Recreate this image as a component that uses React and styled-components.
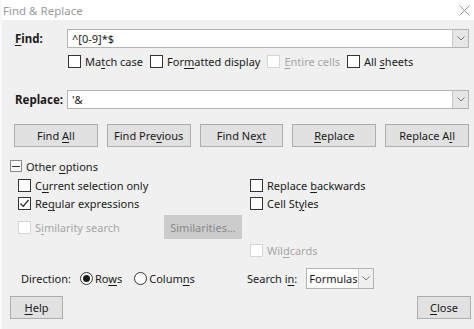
import React from "react";
import styled, { createGlobalStyle, css } from "styled-components";

const Global = createGlobalStyle`
  html, body { margin: 0; padding: 0; background: #f0f0f0; }
  * { box-sizing: border-box; }
`;

const Window = styled.div`
  width: 474px;
  height: 329px;
  background: #f0f0f0;
  font-family: "Segoe UI", "Noto Sans", "Liberation Sans", sans-serif;
  font-size: 11px;
  color: #1a1a1a;
  display: flex;
  flex-direction: column;
  overflow: hidden;
  border-left: 2px solid #f8f8f8;
`;

const TitleBar = styled.div`
  height: 20px;
  background: #ffffff;
  display: flex;
  align-items: center;
  justify-content: space-between;
  padding: 0 4px 0 1px;
  color: #9a9a9a;
  font-size: 11.5px;
`;

const Body = styled.div`
  flex: 1;
  display: flex;
  flex-direction: column;
  padding: 9px 5px 0 0;
`;

const FieldRow = styled.div`
  display: flex;
  align-items: center;
  padding-left: 13px;
  height: 19px;
  margin-top: ${(p) => p.$mt || 0}px;
`;

const Label = styled.div`
  width: 52px;
  font-weight: bold;
  font-size: 11.5px;
`;

const Combo = styled.div`
  flex: 1;
  height: 19px;
  display: flex;
  background: #fff;
  border: 1px solid #b4b4b4;
`;

const ComboText = styled.div`
  flex: 1;
  padding-left: 4px;
  line-height: 17px;
`;

const DropBtn = styled.div`
  width: 16px;
  height: 17px;
  background: #e6e6e6;
  border-left: 1px solid #c8c8c8;
  display: flex;
  align-items: center;
  justify-content: center;
`;

const CheckRow = styled.div`
  display: flex;
  align-items: center;
  gap: 7px;
  padding-left: 66px;
  margin-top: 7px;
  height: 13px;
`;

const Check = styled.label`
  display: flex;
  align-items: center;
  gap: 4px;
  white-space: nowrap;
  color: ${(p) => (p.$disabled ? "#a6a6a6" : "#1a1a1a")};
`;

const Box = styled.span`
  width: 13px;
  height: 13px;
  flex: none;
  background: #fff;
  border: 1px solid ${(p) => (p.$disabled ? "#d6d6d6" : "#333")};
  display: flex;
  align-items: center;
  justify-content: center;
`;

const U = styled.span`
  text-decoration: underline;
  text-underline-offset: 2px;
`;

const ButtonRow = styled.div`
  display: flex;
  gap: 9px;
  padding-left: 12px;
  margin-top: 15px;
`;

const Button = styled.div`
  width: ${(p) => p.$w || 84}px;
  height: ${(p) => p.$h || 23}px;
  background: #e1e1e1;
  border: 1px solid #adadad;
  display: flex;
  align-items: center;
  justify-content: center;
  white-space: nowrap;
  ${(p) =>
    p.$disabled &&
    css`
      background: #cccccc;
      border-color: #cccccc;
      color: #8a8a8a;
    `}
`;

const Expander = styled.div`
  display: flex;
  align-items: center;
  gap: 4px;
  padding-left: 8px;
  margin-top: 12px;
  height: 14px;
`;

const ExpBox = styled.span`
  width: 12px;
  height: 12px;
  border: 1px solid #8a8a8a;
  background: #f8f8f8;
  display: flex;
  align-items: center;
  justify-content: center;
  &::after {
    content: "";
    width: 8px;
    height: 1px;
    background: #333;
  }
`;

const Options = styled.div`
  display: grid;
  grid-template-columns: 232px 1fr;
  row-gap: 5px;
  padding-left: 16px;
  margin-top: 6px;
`;

const Cell = styled.div`
  height: ${(p) => p.$h || 13}px;
  display: flex;
  align-items: center;
  justify-content: space-between;
  padding-right: ${(p) => p.$pr || 0}px;
  grid-column: ${(p) => p.$col || "auto"};
  grid-row: ${(p) => p.$row || "auto"};
`;

const DirRow = styled.div`
  display: flex;
  align-items: center;
  height: 21px;
  margin-top: 11px;
  padding-left: 19px;
`;

const DirLabel = styled.div`
  width: 59px;
`;

const Radio = styled.label`
  display: flex;
  align-items: center;
  gap: 2px;
  margin-right: 12px;
`;

const Circle = styled.span`
  width: 13px;
  height: 13px;
  border-radius: 50%;
  border: 1px solid #333;
  background: #fff;
  display: flex;
  align-items: center;
  justify-content: center;
  &::after {
    content: "";
    width: 7px;
    height: 7px;
    border-radius: 50%;
    background: ${(p) => (p.$on ? "#1a1a1a" : "transparent")};
  }
`;

const SearchIn = styled.div`
  margin-left: auto;
  width: 222px;
  display: flex;
  align-items: center;
  gap: 9px;
`;

const Select = styled.div`
  width: 68px;
  height: 21px;
  border: 1px solid #b4b4b4;
  background: #fff;
  display: flex;
`;

const SelectText = styled.div`
  flex: 1;
  padding-left: 2px;
  line-height: 19px;
`;

const SelectBtn = styled.div`
  width: 19px;
  border-left: 1px solid #c8c8c8;
  background: #f0f0f0;
  display: flex;
  align-items: center;
  justify-content: center;
`;

const Footer = styled.div`
  display: flex;
  justify-content: space-between;
  margin-top: 7px;
  padding-left: 8px;
  margin-right: -2px;
`;

const Chevron = () => (
  <svg width="8" height="5" viewBox="0 0 8 5">
    <path d="M0.5 0.5 L4 4 L7.5 0.5" fill="none" stroke="#777" strokeWidth="1" />
  </svg>
);

const Tick = () => (
  <svg width="11" height="11" viewBox="0 0 11 11">
    <path d="M1.5 5.5 L4.2 8.3 L9.5 2" fill="none" stroke="#222" strokeWidth="1.2" />
  </svg>
);

const CloseX = () => (
  <svg width="11" height="11" viewBox="0 0 11 11">
    <path d="M0.5 0.5 L10.5 10.5 M10.5 0.5 L0.5 10.5" stroke="#9a9a9a" strokeWidth="1" />
  </svg>
);

const CB = ({ checked, disabled, children }) => (
  <Check $disabled={disabled}>
    <Box $disabled={disabled}>{checked && <Tick />}</Box>
    <span>{children}</span>
  </Check>
);

export default function App() {
  return (
    <>
      <Global />
      <Window>
        <TitleBar>
          <span>Find &amp; Replace</span>
          <CloseX />
        </TitleBar>
        <Body>
          <FieldRow>
            <Label>
              <U>F</U>ind:
            </Label>
            <Combo>
              <ComboText>^[0-9]*$</ComboText>
              <DropBtn>
                <Chevron />
              </DropBtn>
            </Combo>
          </FieldRow>
          <CheckRow>
            <CB>
              Ma<U>t</U>ch case
            </CB>
            <CB>
              For<U>m</U>atted display
            </CB>
            <CB disabled>
              <U>E</U>ntire cells
            </CB>
            <CB>
              All <U>s</U>heets
            </CB>
          </CheckRow>
          <FieldRow $mt={22}>
            <Label>Replace:</Label>
            <Combo>
              <ComboText>'&amp;</ComboText>
              <DropBtn>
                <Chevron />
              </DropBtn>
            </Combo>
          </FieldRow>
          <ButtonRow>
            <Button>
              Find&nbsp;<U>A</U>ll
            </Button>
            <Button>
              Find Pre<U>v</U>ious
            </Button>
            <Button>
              Find Ne<U>x</U>t
            </Button>
            <Button>
              <U>R</U>eplace
            </Button>
            <Button>
              Replace A<U>l</U>l
            </Button>
          </ButtonRow>
          <Expander>
            <ExpBox />
            <span>
              Other <U>o</U>ptions
            </span>
          </Expander>
          <Options>
            <Cell $col="1" $row="1">
              <CB>
                C<U>u</U>rrent selection only
              </CB>
            </Cell>
            <Cell $col="2" $row="1">
              <CB>
                Replace <U>b</U>ackwards
              </CB>
            </Cell>
            <Cell $col="1" $row="2">
              <CB checked>
                Re<U>g</U>ular expressions
              </CB>
            </Cell>
            <Cell $col="2" $row="2">
              <CB>
                Cell St<U>y</U>les
              </CB>
            </Cell>
            <Cell $h={24} $pr={8} $col="1" $row="3">
              <CB disabled>
                S<U>i</U>milarity search
              </CB>
              <Button $disabled $w={78} $h={24}>
                Similarities...
              </Button>
            </Cell>
            <Cell $col="2" $row="4">
              <CB disabled>
                Wil<U>d</U>cards
              </CB>
            </Cell>
          </Options>
          <DirRow>
            <DirLabel>Direction:</DirLabel>
            <Radio>
              <Circle $on />
              <span>
                Ro<U>w</U>s
              </span>
            </Radio>
            <Radio>
              <Circle />
              <span>
                Colum<U>n</U>s
              </span>
            </Radio>
            <SearchIn>
              <span>
                Search i<U>n</U>:
              </span>
              <Select>
                <SelectText>Formulas</SelectText>
                <SelectBtn>
                  <Chevron />
                </SelectBtn>
              </Select>
            </SearchIn>
          </DirRow>
          <Footer>
            <Button $w={53}>
              <U>H</U>elp
            </Button>
            <Button $w={54}>
              <U>C</U>lose
            </Button>
          </Footer>
        </Body>
      </Window>
    </>
  );
}
